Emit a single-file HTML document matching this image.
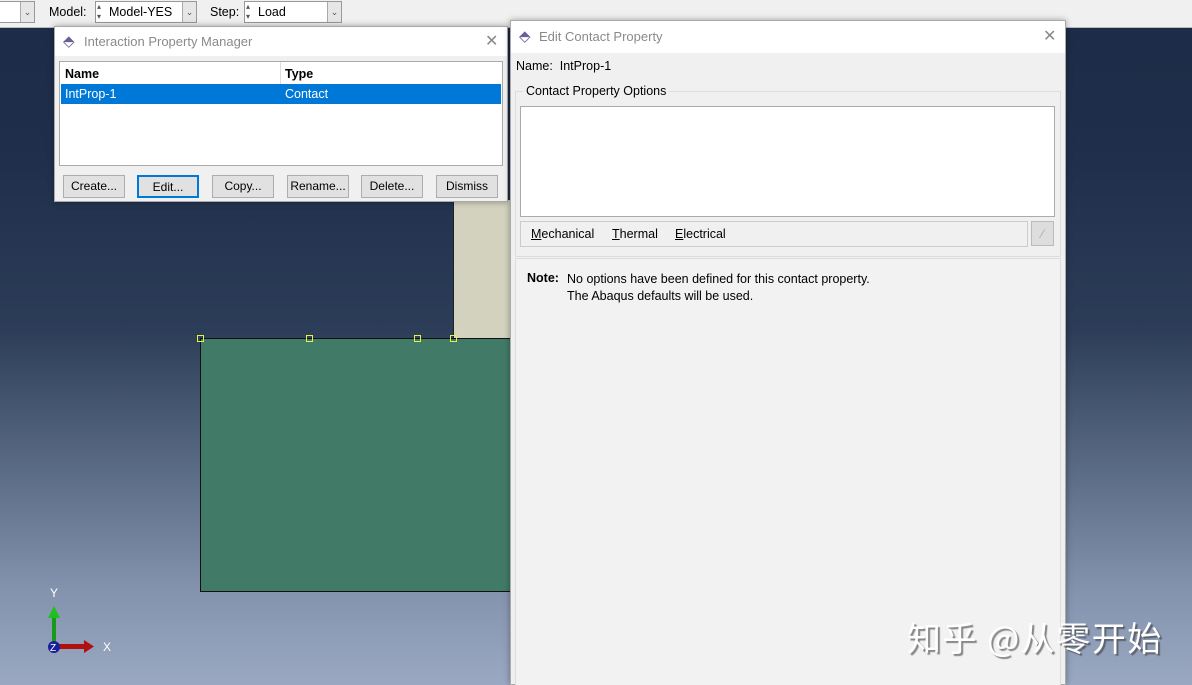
<!DOCTYPE html>
<html style="width:1192px;height:685px;overflow:hidden"><head><meta charset="utf-8"><style>
*{box-sizing:border-box;margin:0;padding:0}
html{background:#9aa8c2}
body{width:1192px;height:685px;overflow:hidden;position:relative;font-family:"Liberation Sans","Noto Sans CJK SC",sans-serif;font-size:12.5px;color:#000;
background:linear-gradient(to bottom,#1c2b46 0px,#1f2f4b 150px,#2c3d58 330px,#5d6e88 480px,#8493ad 590px,#9aa8c2 685px)}
.abs{position:absolute}
.tb{left:0;top:0;width:1192px;height:28px;background:#f0f0f0;border-bottom:1px solid #bbb}
.combo{position:absolute;top:1px;height:22px;background:#fff;border:1px solid #999}
.combo .arr{position:absolute;right:0;top:0;width:14px;height:20px;background:#e6e6e6;border-left:1px solid #aaa;font-size:9px;text-align:center;line-height:20px;color:#555}
.dlg{background:#f0f0f0;border:1px solid #aaa;box-shadow:0 0 6px rgba(0,0,0,.35)}
.title{position:absolute;left:0;top:0;right:0;background:#fff;color:#8a8a8a;font-size:13px}
.btn{position:absolute;top:174px;height:23px;background:#e1e1e1;border:1px solid #adadad;text-align:center;line-height:21px;font-size:12px}
.x{position:absolute;font-size:16px;color:#888;font-weight:300}
</style></head><body>
<div class="abs tb">
 <div class="combo" style="left:-2px;width:37px"><div class="arr">⌄</div></div>
 <span class="abs" style="left:49px;top:5px">Model:</span>
 <div class="combo" style="left:95px;width:102px"><span style="position:absolute;left:1px;top:0;font-size:8px;color:#555;line-height:10px">▴<br>▾</span><span style="position:absolute;left:13px;top:3px">Model-YES</span><div class="arr">⌄</div></div>
 <span class="abs" style="left:210px;top:5px">Step:</span>
 <div class="combo" style="left:244px;width:98px"><span style="position:absolute;left:1px;top:0;font-size:8px;color:#555;line-height:10px">▴<br>▾</span><span style="position:absolute;left:13px;top:3px">Load</span><div class="arr">⌄</div></div>
</div>
<div class="abs" style="left:453px;top:200px;width:60px;height:138px;background:#d3d2bf;border-left:1px solid #222"></div>
<div class="abs" style="left:200px;top:338px;width:312px;height:254px;background:#417a66;border:1px solid #111"></div>
<div class="abs" style="left:197px;top:335px;width:7px;height:7px;border:1.5px solid #e6f04a"></div>
<div class="abs" style="left:306px;top:335px;width:7px;height:7px;border:1.5px solid #e6f04a"></div>
<div class="abs" style="left:414px;top:335px;width:7px;height:7px;border:1.5px solid #e6f04a"></div>
<div class="abs" style="left:450px;top:335px;width:7px;height:7px;border:1.5px solid #e6f04a"></div>
<svg class="abs" style="left:40px;top:580px" width="80" height="80">
<text x="10" y="17" fill="#fff" font-size="12" font-family="Liberation Sans">Y</text>
<rect x="12" y="35" width="4" height="30" fill="#1a9a1a"/><polygon points="8,38 14,26 20,38" fill="#1fbf1f"/>
<rect x="16" y="64" width="30" height="5" fill="#b01010"/><polygon points="44,60 54,66.5 44,73" fill="#b01010"/>
<circle cx="14" cy="67" r="6" fill="#1a1f9a"/><text x="10" y="71" fill="#fff" font-size="10" font-family="Liberation Sans">Z</text>
<text x="63" y="71" fill="#fff" font-size="12" font-family="Liberation Sans">X</text>
</svg>

<div class="abs dlg" style="left:54px;top:26px;width:454px;height:176px">
 <div class="title" style="height:29px"><span style="position:absolute;left:8px;top:5px;color:#6a5f9a;font-size:15px">⬘</span><span style="position:absolute;left:29px;top:7px">Interaction Property Manager</span><span class="x" style="left:430px;top:4px">✕</span></div>
 <div class="abs" style="left:4px;top:34px;width:444px;height:105px;background:#fff;border:1px solid #aaa">
  <div class="abs" style="left:0;top:0;width:442px;height:22px;font-weight:bold"><span class="abs" style="left:5px;top:5px">Name</span><span class="abs" style="left:220px;top:0;height:22px;border-left:1px solid #ddd"></span><span class="abs" style="left:225px;top:5px">Type</span></div>
  <div class="abs" style="left:1px;top:22px;width:440px;height:20px;background:#0078d7;color:#fff"><span class="abs" style="left:4px;top:3px">IntProp-1</span><span class="abs" style="left:224px;top:3px">Contact</span></div>
 </div>
 <div class="btn" style="left:8px;top:148px;width:62px">Create...</div>
 <div class="btn" style="left:82px;top:148px;width:62px;border:2px solid #0078d7">Edit...</div>
 <div class="btn" style="left:157px;top:148px;width:62px">Copy...</div>
 <div class="btn" style="left:232px;top:148px;width:62px">Rename...</div>
 <div class="btn" style="left:306px;top:148px;width:62px">Delete...</div>
 <div class="btn" style="left:381px;top:148px;width:62px">Dismiss</div>
</div>

<div class="abs dlg" style="left:510px;top:20px;width:556px;height:665px">
 <div class="title" style="height:32px"><span style="position:absolute;left:8px;top:6px;color:#6a5f9a;font-size:15px">⬘</span><span style="position:absolute;left:28px;top:8px">Edit Contact Property</span><span class="x" style="left:532px;top:5px">✕</span></div>
 <span class="abs" style="left:5px;top:38px">Name:&nbsp; IntProp-1</span>
 <div class="abs" style="left:4px;top:70px;width:546px;height:166px;border:1px solid #ddd"></div>
 <span class="abs" style="left:12px;top:63px;background:#f0f0f0;padding:0 3px">Contact Property Options</span>
 <div class="abs" style="left:9px;top:85px;width:535px;height:111px;background:#fff;border:1px solid #aaa"></div>
 <div class="abs" style="left:9px;top:200px;width:508px;height:26px;border:1px solid #ccc;background:#f0f0f0">
  <span class="abs" style="left:10px;top:5px"><u>M</u>echanical</span><span class="abs" style="left:91px;top:5px"><u>T</u>hermal</span><span class="abs" style="left:154px;top:5px"><u>E</u>lectrical</span>
 </div>
 <div class="abs" style="left:520px;top:200px;width:23px;height:25px;background:#ddd;border:1px solid #bbb;color:#aaa;text-align:center;line-height:24px;font-size:12px">⁄</div>
 <div class="abs" style="left:4px;top:237px;width:546px;height:430px;border:1px solid #ddd;background:#f2f2f2"></div>
 <span class="abs" style="left:16px;top:250px;font-weight:bold">Note:</span>
 <span class="abs" style="left:56px;top:250px;line-height:17px">No options have been defined for this contact property.<br>The Abaqus defaults will be used.</span>
</div>

<div class="abs" style="left:907px;top:612px;font-size:34px;letter-spacing:1.5px;color:#fff;font-family:'Noto Sans CJK SC',sans-serif;text-shadow:2px 2px 1px rgba(60,60,60,.6);white-space:nowrap">知乎 @从零开始</div>
</body></html>
